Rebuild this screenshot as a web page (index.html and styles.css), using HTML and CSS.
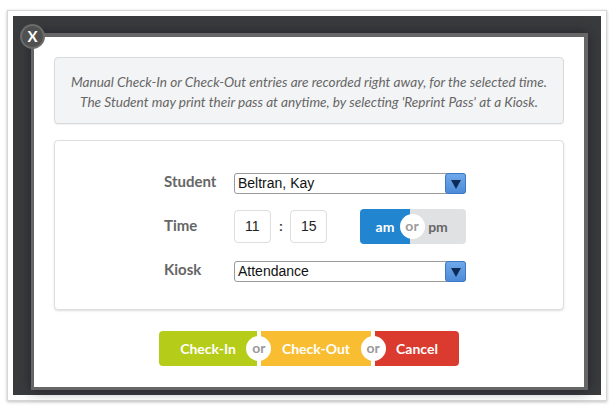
FILE: index.html
```html
<!DOCTYPE html>
<html>
<head>
<meta charset="utf-8">
<link rel="stylesheet" href="styles.css">
</head>
<body>
<div class="window">
  <div class="backdrop">
    <div class="dialog">
      <div class="close">X</div>
      <div class="message">
        Manual Check-In or Check-Out entries are recorded right away, for the selected time.<br>
        The Student may print their pass at anytime, by selecting 'Reprint Pass' at a Kiosk.
      </div>
      <div class="segment">
        <div class="form">
          <div class="label">Student</div>
          <div class="field">
            <div class="select"><span class="select-text">Beltran, Kay</span><span class="arrow"><span class="tri"></span></span></div>
          </div>
          <div class="label">Time</div>
          <div class="field time">
            <div class="tinput">11</div>
            <div class="colon">:</div>
            <div class="tinput">15</div>
            <div class="toggle">
              <div class="tbtn am">am</div>
              <div class="or"></div>
              <div class="tbtn pm">pm</div>
            </div>
          </div>
          <div class="label">Kiosk</div>
          <div class="field">
            <div class="select"><span class="select-text">Attendance</span><span class="arrow"><span class="tri"></span></span></div>
          </div>
        </div>
      </div>
      <div class="actions">
        <div class="btn checkin">Check-In</div>
        <div class="or"></div>
        <div class="btn checkout">Check-Out</div>
        <div class="or"></div>
        <div class="btn cancel">Cancel</div>
      </div>
    </div>
  </div>
</div>
</body>
</html>
```
FILE: styles.css
```css
* { box-sizing: border-box; }
html, body { margin: 0; padding: 0; background: #fff; }
body { width: 614px; height: 407px; overflow: hidden; font-family: Lato, "Liberation Sans", sans-serif; font-size: 14px; }

.window {
  margin: 10px 0 0 7px;
  width: 600px;
  height: 391px;
  border: 1px solid #d6d6d6;
  box-shadow: 0 1px 3px rgba(0,0,0,0.25);
  padding: 5px;
  background: #fff;
}
.backdrop {
  height: 100%;
  background: #3a3b3d;
  padding: 17px 13px 5px 18px;
  display: flex;
}
.dialog {
  position: relative;
  flex: 1;
  background: #fff;
  border: 3px solid #666;
  border-right-width: 4px;
  border-top-width: 4px;
  box-shadow: 0 0 12px rgba(15,20,35,0.6);
  padding: 20px 20px 20px 20px;
  display: flex;
  flex-direction: column;
}
.close {
  position: absolute;
  left: -14px;
  top: -13px;
  width: 25px;
  height: 25px;
  border-radius: 50%;
  background: #505050;
  border: 2px solid #6b6b6b;
  color: #fff;
  font-weight: 700;
  font-size: 15px;
  line-height: 21px;
  text-align: center;
}
.message {
  height: 67px;
  background: #f3f4f5;
  border: 1px solid #d9dadc;
  border-radius: 4px;
  box-shadow: 0 1px 1px rgba(0,0,0,0.06);
  padding: 14px 0 11px;
  line-height: 20px;
  font-style: italic;
  color: #666;
  text-align: center;
  font-size: 13.6px;
  white-space: nowrap;
}
.segment {
  margin-top: 16px;
  height: 170px;
  border: 1px solid rgba(34,36,38,0.15);
  border-radius: 4px;
  box-shadow: 0 1px 2px rgba(34,36,38,0.15);
  padding: 24px 0 0 109px;
}
.form {
  display: grid;
  grid-template-columns: 70px 232px;
  grid-template-rows: 35px 35px 35px;
  row-gap: 9px;
  align-items: center;
}
.label {
  font-weight: 700;
  color: #666;
  font-size: 15px;
  margin-top: -3px;
}
.field { display: flex; align-items: center; }
.select {
  width: 232px;
  height: 21px;
  border: 1px solid #9a9a9a;
  border-radius: 3px;
  display: flex;
  align-items: center;
  font-family: "Liberation Sans", Arial, sans-serif;
  font-size: 14px;
  color: #111;
  background: #fff;
  margin-top: 2px;
}
.select-text { flex: 1; padding-left: 3px; line-height: 19px; }
.arrow {
  width: 21px;
  height: 21px;
  margin: -1px -1px -1px 0;
  border: 1px solid #3c78c6;
  border-radius: 3px;
  background: linear-gradient(#6fa9ea, #4d8bd8);
  display: flex;
  align-items: center;
  justify-content: center;
}
.tri {
  width: 0; height: 0;
  border-left: 5px solid transparent;
  border-right: 5px solid transparent;
  border-top: 9px solid #0e2b58;
  margin-top: 1px;
}
.time { height: 35px; }
.tinput {
  width: 37px;
  height: 33px;
  border: 1px solid rgba(34,36,38,0.15);
  border-radius: 4px;
  font-family: "Liberation Sans", Arial, sans-serif;
  font-size: 14px;
  color: #222;
  line-height: 31px;
  padding-left: 10px;
}
.colon {
  width: 19px;
  text-align: center;
  color: #444;
  font-family: "Liberation Sans", Arial, sans-serif;
  font-weight: 700;
  font-size: 13px;
  padding-left: 1px;
}
.toggle {
  margin-left: 33px;
  display: flex;
  height: 35px;
  position: relative;
}
.tbtn {
  height: 35px;
  line-height: 35px;
  font-weight: 700;
  text-align: center;
  font-size: 14px;
}
.am { width: 50px; background: #2185d0; color: #fff; border-radius: 4px 0 0 4px; }
.pm { width: 56px; background: #e0e1e2; color: #666; border-radius: 0 4px 4px 0; }
.or {
  position: relative;
  width: 0;
  z-index: 2;
}
.toggle .or { left: 2px; }
.or::before {
  content: "or";
  position: absolute;
  top: 50%;
  left: 50%;
  width: 25px;
  height: 25px;
  margin: -12.5px 0 0 -12.5px;
  border-radius: 50%;
  background: #fff;
  color: #9a9a9a;
  font-weight: 700;
  font-size: 14px;
  line-height: 24px;
  text-align: center;
}
.actions {
  margin-top: 21px;
  display: flex;
  justify-content: center;
  height: 35px;
}
.actions .or { width: 4px; }
.btn {
  height: 35px;
  line-height: 35px;
  padding: 0 21px;
  color: #fff;
  font-weight: 700;
  font-size: 14px;
}
.checkin { background: #b5cc18; border-radius: 4px 0 0 4px; }
.checkout { background: #f8bd31; }
.cancel { background: #db3a2f; border-radius: 0 4px 4px 0; }
```
